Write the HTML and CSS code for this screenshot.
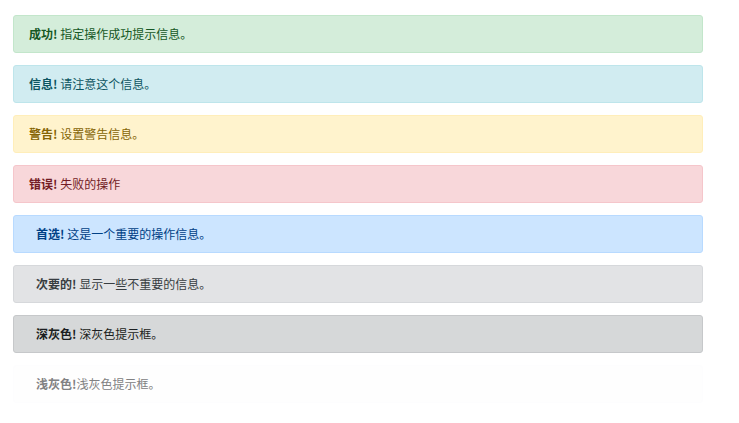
FILE: index.html
```html
<!DOCTYPE html>
<html lang="zh">
<head>
<meta charset="utf-8">
<link rel="stylesheet" href="styles.css">
</head>
<body>
<div class="container">
  <div class="alert alert-success"><strong>成功!</strong> 指定操作成功提示信息。</div>
  <div class="alert alert-info"><strong>信息!</strong> 请注意这个信息。</div>
  <div class="alert alert-warning"><strong>警告!</strong> 设置警告信息。</div>
  <div class="alert alert-danger"><strong>错误!</strong> 失败的操作</div>
  <div class="alert alert-primary indent"><strong>首选!</strong> 这是一个重要的操作信息。</div>
  <div class="alert alert-secondary indent"><strong>次要的!</strong> 显示一些不重要的信息。</div>
  <div class="alert alert-dark indent"><strong>深灰色!</strong> 深灰色提示框。</div>
  <div class="alert alert-light indent"><strong>浅灰色!</strong>浅灰色提示框。</div>
</div>
</body>
</html>
```
FILE: styles.css
```css
html, body {
  margin: 0;
  padding: 0;
  background: #fff;
}
body {
  font-family: "Noto Sans CJK SC", "Microsoft YaHei", sans-serif;
  font-size: 12px;
  line-height: 18px;
}
.container {
  width: 690px;
  padding: 15px 0 0 13px;
  display: flex;
  flex-direction: column;
  gap: 12px;
}
.alert {
  padding: 9px 15px;
  border: 1px solid transparent;
  border-radius: 3px;
}
.alert strong {
  font-weight: 700;
}
.indent {
  padding-left: 22px;
}
.alert-success { color: #155724; background: #d4edda; border-color: #c3e6cb; }
.alert-info { color: #0c5460; background: #d1ecf1; border-color: #bee5eb; }
.alert-warning { color: #856404; background: #fff3cd; border-color: #ffeeba; }
.alert-danger { color: #721c24; background: #f8d7da; border-color: #f5c6cb; }
.alert-primary { color: #004085; background: #cce5ff; border-color: #b8daff; }
.alert-secondary { color: #383d41; background: #e2e3e5; border-color: #d6d8db; }
.alert-dark { color: #1b1e21; background: #d6d8d9; border-color: #c6c8ca; }
.alert-light { color: #818182; background: #fefefe; border-color: #fdfdfe; }
```
